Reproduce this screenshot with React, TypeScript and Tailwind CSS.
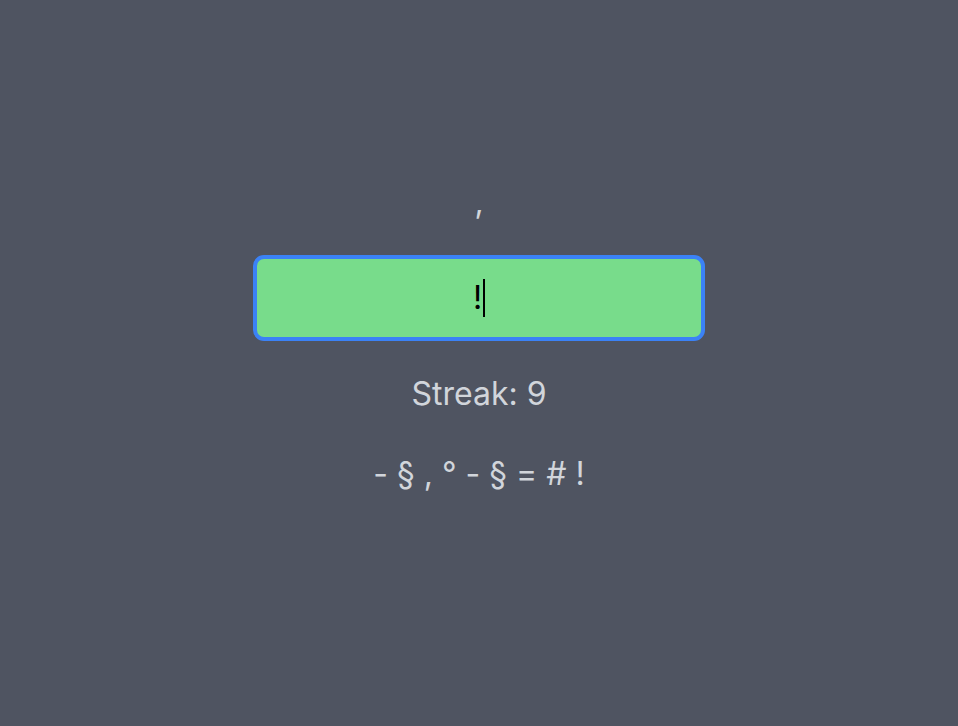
import React from "react";

export default function App() {
  return (
    <div
      className="min-h-screen w-full bg-[#4f5461] flex flex-col items-center pt-[184px]"
      style={{ fontFamily: "Inter, 'Noto Sans', sans-serif" }}
    >
      <div className="text-[32px] leading-9 text-[#d1d5db] h-9">,</div>
      <div className="mt-[35px] w-[452px] h-[86px] rounded-[11px] border-4 border-[#3b82f6] bg-[#78dc8b] flex items-center justify-center">
        <span className="text-[32px] text-black leading-9">!</span>
        <span className="ml-[1px] w-[2px] h-[38px] bg-black" />
      </div>
      <div className="mt-[35px] text-[32px] leading-9 text-[#d1d5db]">Streak: 9</div>
      <div className="mt-[44px] text-[32px] leading-9 text-[#d1d5db] whitespace-pre">- § , ° - § = # !</div>
    </div>
  );
}
